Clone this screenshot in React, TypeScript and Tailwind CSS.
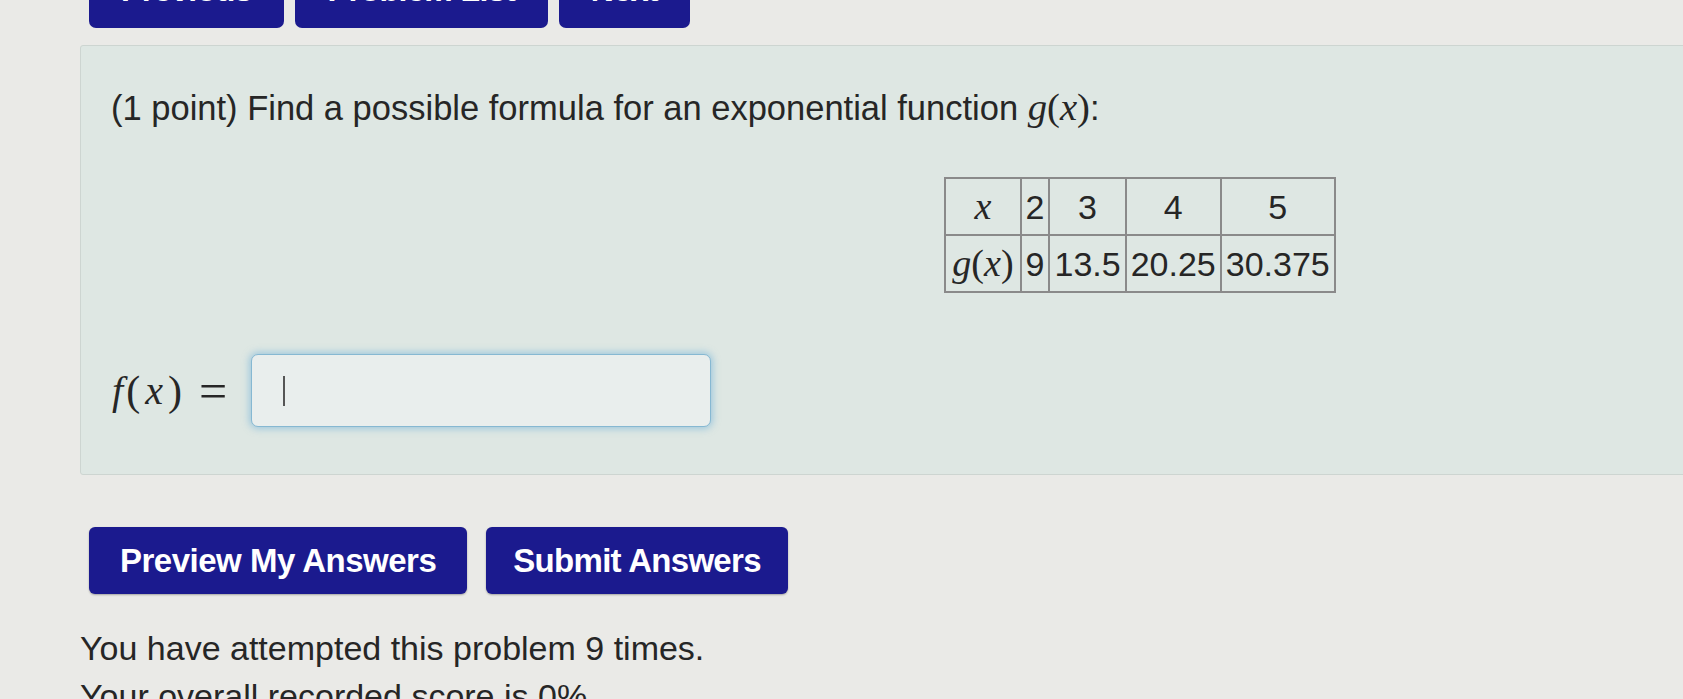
import React from "react";

const sans = { fontFamily: '"Liberation Sans", Arial, Helvetica, sans-serif' };
const serif = { fontFamily: '"Liberation Serif", "Times New Roman", serif' };

function M({ children }: { children: React.ReactNode }) {
  return (
    <span className="italic text-[1.12em]" style={serif}>
      {children}
    </span>
  );
}

function Up({ children }: { children: React.ReactNode }) {
  return (
    <span className="text-[1.12em]" style={serif}>
      {children}
    </span>
  );
}

function TopButton({ label, w }: { label: string; w: string }) {
  return (
    <div
      className={`h-[67px] ${w} rounded-[7px] bg-[#1b1a8e] text-white font-bold text-[32px] leading-[37px] flex items-center justify-center pb-[9px] tracking-[-0.5px]`}
    >
      {label}
    </div>
  );
}

export default function App() {
  const head = ["2", "3", "4", "5"];
  const vals = ["9", "13.5", "20.25", "30.375"];
  return (
    <div className="w-[1683px] h-[699px] overflow-hidden bg-[#eaeae7] text-[#262626]" style={sans}>
      {/* top navigation buttons, mostly scrolled out of view */}
      <div className="flex gap-[11px] ml-[89px] -mt-[39px]">
        <TopButton label="Previous" w="w-[195px]" />
        <TopButton label="Problem List" w="w-[253px]" />
        <TopButton label="Next" w="w-[131px]" />
      </div>

      {/* problem box */}
      <div className="ml-[80px] mt-[17px] w-[2120px] bg-[#dee7e3] border border-[#cdd5d1] rounded-[3px] pl-[30px] pr-[30px] pt-[40px] pb-[47px]">
        <div className="text-[34.5px] leading-[42px] whitespace-nowrap">
          (1 point) Find a possible formula for an exponential function <M>g</M>
          <Up>(</Up>
          <M>x</M>
          <Up>)</Up>:
        </div>

        <table className="mx-auto mt-[48px] border-collapse text-[34px] leading-[38px]">
          <tbody>
            <tr>
              <td className="border-2 border-[#8a8a8a] px-[6px] py-[8px] text-center">
                <M>x</M>
              </td>
              {head.map((h) => (
                <td key={h} className="border-2 border-[#8a8a8a] px-[4px] py-[8px] text-center">
                  {h}
                </td>
              ))}
            </tr>
            <tr>
              <td className="border-2 border-[#8a8a8a] px-[6px] py-[8px] text-center whitespace-nowrap">
                <M>g</M>
                <Up>(</Up>
                <M>x</M>
                <Up>)</Up>
              </td>
              {vals.map((v) => (
                <td key={v} className="border-2 border-[#8a8a8a] px-[4px] py-[8px] text-center">
                  {v}
                </td>
              ))}
            </tr>
          </tbody>
        </table>

        <div className="mt-[61px] flex items-center gap-[24px] -ml-[3px]">
          <div className="text-[36px] leading-[44px] whitespace-nowrap flex items-center" style={serif}>
            <span className="italic text-[40px] ml-[4px] mr-[3px]">f</span>
            <span className="text-[42px]">(</span>
            <span className="italic text-[40px] mx-[5px]">x</span>
            <span className="text-[42px]">)</span>
            <span className="ml-[17px] text-[50px]">=</span>
          </div>
          <div className="w-[460px] h-[73px] rounded-[7px] bg-[#e9eeed] border border-[#86b8d2] shadow-[0_0_7px_2px_rgba(110,175,215,0.55)] flex items-center pl-[31px]">
            <div className="w-[2px] h-[30px] bg-[#555]" />
          </div>
        </div>
      </div>

      {/* action buttons */}
      <div className="flex gap-[19px] ml-[89px] mt-[52px]">
        <div className="h-[67px] px-[31px] rounded-[6px] bg-[#1b1a8e] text-white font-bold text-[33px] leading-[37px] flex items-center tracking-[-0.5px] shadow-[0_1px_2px_rgba(0,0,0,0.3)]">
          Preview My Answers
        </div>
        <div className="h-[67px] px-[27px] rounded-[6px] bg-[#1b1a8e] text-white font-bold text-[33px] leading-[37px] flex items-center tracking-[-0.7px] shadow-[0_1px_2px_rgba(0,0,0,0.3)]">
          Submit Answers
        </div>
      </div>

      <div className="ml-[80px] mt-[30px] text-[34px] leading-[48px]">
        <div>You have attempted this problem 9 times.</div>
        <div>Your overall recorded score is 0%.</div>
      </div>
    </div>
  );
}
